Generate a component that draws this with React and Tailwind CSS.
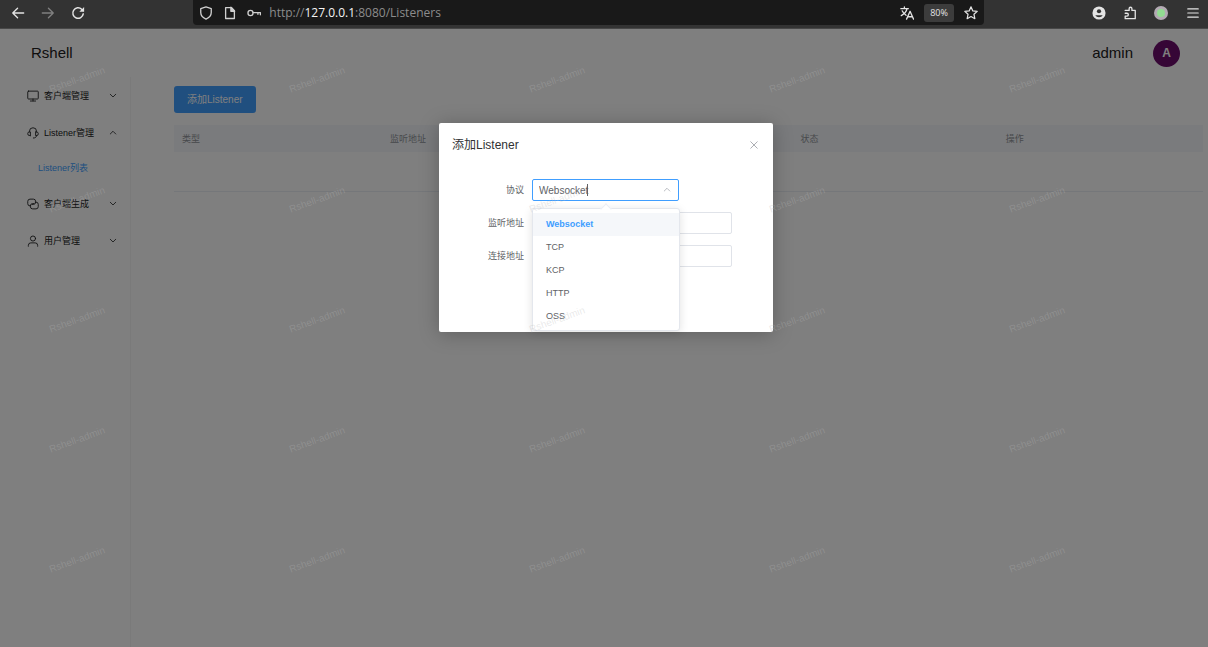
import React from "react";

const navGroups = [
  { label: "客户端管理", icon: "monitor", open: false, items: [] },
  { label: "Listener管理", icon: "headset", open: true, items: ["Listener列表"] },
  { label: "客户端生成", icon: "link", open: false, items: [] },
  { label: "用户管理", icon: "user", open: false, items: [] },
];

const columns = ["类型", "监听地址", "连接地址", "状态", "操作"];
const protocols = ["Websocket", "TCP", "KCP", "HTTP", "OSS"];

function Svg({ size = 16, width = 1.5, children, className = "" }) {
  return (
    <svg
      width={size}
      height={size}
      viewBox="0 0 16 16"
      fill="none"
      stroke="currentColor"
      strokeWidth={width}
      strokeLinecap="round"
      strokeLinejoin="round"
      className={"shrink-0 " + className}
      aria-hidden="true"
    >
      {children}
    </svg>
  );
}

function Chevron({ up = false }) {
  return (
    <Svg size={8} width={1.6}>
      <path d={up ? "M2.500 10L8 4.500l5.500 5.500" : "M2.500 4.500L8 10l5.500-5.500"} />
    </Svg>
  );
}

function NavIcon({ name }) {
  return (
    <Svg size={12} width={1.2}>
      {name === "monitor" && (
        <path d="M2 1.500h12a1 1 0 0 1 1 1V11a1 1 0 0 1-1 1H2a1 1 0 0 1-1-1V2.500a1 1 0 0 1 1-1zM8 12v2.500M4.500 14.700h7" />
      )}
      {name === "headset" && (
        <path d="M4.500 11.500v-5H3.300A2.300 2.300 0 0 0 1 8.800v.4a2.300 2.300 0 0 0 2.300 2.300zM11.500 6.500v5h1.200A2.300 2.300 0 0 0 15 9.200v-.4a2.300 2.300 0 0 0-2.300-2.300zM3.300 6.500V5.700a4.700 4.700 0 0 1 9.400 0v.8M12.700 11.500c0 2-1.500 3.200-4.200 3.200" />
      )}
      {name === "link" && (
        <path d="M5 10.500H4A3 3 0 0 1 1 7.500v-3a3 3 0 0 1 3-3h4.500a3 3 0 0 1 3 3v1A3 3 0 0 1 8.500 8.500H7M11 5.500h1a3 3 0 0 1 3 3v3a3 3 0 0 1-3 3H7.500a3 3 0 0 1-3-3v-1a3 3 0 0 1 3-3H9" />
      )}
      {name === "user" && (
        <>
          <circle cx="8" cy="4.700" r="3.400" />
          <path d="M1.800 15v-1.200a3.300 3.300 0 0 1 3.300-3.300h5.800a3.300 3.300 0 0 1 3.300 3.300V15" />
        </>
      )}
    </Svg>
  );
}

function BrowserBar() {
  return (
    <header className="flex h-[29px] shrink-0 items-start border-b border-[#484848] bg-[#333333] text-[#e4e4e4]">
      <div className="flex h-[25px] w-[16%] shrink-0 items-center gap-4 pl-[11px]">
        <button aria-label="Back" className="flex">
          <Svg size={14}><path d="M14.500 8H2M7.500 2.500L2 8l5.500 5.500" /></Svg>
        </button>
        <button aria-label="Forward" className="flex text-[#808080]">
          <Svg size={14}><path d="M1.500 8H14M8.500 2.500L14 8l-5.500 5.500" /></Svg>
        </button>
        <button aria-label="Reload" className="flex">
          <Svg size={14} width={1.7}>
            <path d="M14 9a6 6 0 1 1-1.800-5.300L14 5.200" />
            <path d="M15 1v5.500H9.500z" fill="currentColor" stroke="none" />
          </Svg>
        </button>
      </div>
      <div className="flex h-[25px] min-w-0 flex-1 items-center rounded-b bg-[#191919] px-1.5">
        <Svg size={14} className="text-[#d0d0d0]"><path d="M8 1l6 2v4.500c0 3.500-2.500 6-6 7.500-3.500-1.500-6-4-6-7.500V3z" /></Svg>
        <Svg size={14} className="ml-2.5 text-[#d0d0d0]">
          <path d="M3 1.800h6.500L13 5.300v9H3z" />
          <path d="M9 1.500V6h4.300z" fill="currentColor" />
        </Svg>
        <Svg size={14} className="ml-2.5 text-[#d0d0d0]">
          <circle cx="4" cy="8" r="2.900" />
          <path d="M7 7.500h8.300v2.500M12.500 7.500v2" />
        </Svg>
        <span className="ml-2 flex-1 truncate font-['Open_Sans',sans-serif] text-[12px] text-[#8c8c8c]">
          http://<span className="text-[#f4f4f4]">127.0.0.1</span>:8080/Listeners
        </span>
        <button aria-label="Translate" className="flex">
          <Svg size={14}><path d="M1 3h8.500M5 1v2M1.500 11c3.500-2 6-4.500 6.500-8M2.500 5.500C3.500 8 5 9 7 10.500M7.500 15L11.500 6l4 9M9 12.300h5" /></Svg>
        </button>
        <button className="ml-2.5 h-[18px] w-[30px] rounded-[3px] bg-[#3c3c3c] font-['Open_Sans',sans-serif] text-[9px]">80%</button>
        <button aria-label="Bookmark" className="ml-2.5 flex">
          <Svg size={14} width={1.4}><path d="M8 1l2.100 4.600 5 .5-3.700 3.400 1 5L8 12l-4.400 2.500 1-5L.9 6.100l5-.5z" /></Svg>
        </button>
      </div>
      <div className="flex h-[25px] w-[224px] shrink-0 items-center justify-end gap-[17px] pr-[9px]">
        <button aria-label="Account" className="flex">
          <Svg size={14}>
            <circle cx="8" cy="8" r="7.500" fill="currentColor" stroke="none" />
            <circle cx="8" cy="6" r="2.400" fill="#333" stroke="none" />
            <path d="M3.800 10.500h8.400c-1.500 3-6.900 3-8.400 0z" fill="#333" stroke="none" />
          </Svg>
        </button>
        <button aria-label="Extensions" className="flex">
          <Svg size={14}><path d="M2.500 5H7V3a1.600 1.600 0 0 1 3.200 0v2H14v9.500H2.500V11.500H4.500a1.600 1.600 0 0 0 0-3.200H2.500" /></Svg>
        </button>
        <button aria-label="Extension" className="h-3.5 w-3.5 rounded-full border-[3px] border-[#b3aab3] bg-[#92dc92]" />
        <button aria-label="Menu" className="ml-0.5 flex">
          <Svg size={12}><path d="M1 2.500h14M1 8h14M1 13.500h14" /></Svg>
        </button>
      </div>
    </header>
  );
}

function Sidebar() {
  return (
    <nav className="w-[131px] shrink-0 border-r border-[#f4f4f4]">
      {navGroups.map((group) => (
        <div key={group.label}>
          <button className="flex h-[37px] w-full items-center gap-[5px] pl-[27px] pr-[13px] text-[9px] text-[#202122]">
            <NavIcon name={group.icon} />
            <span className="flex-1 text-left whitespace-nowrap">{group.label}</span>
            <Chevron up={group.open} />
          </button>
          {group.items.map((item) => (
            <a key={item} href="#listeners" className="flex h-[34px] items-center pl-[38px] text-[9px] text-[#409eff]">
              {item}
            </a>
          ))}
        </div>
      ))}
    </nav>
  );
}

function ListenerTable() {
  return (
    <main className="min-w-0 flex-1 pl-[43px] pr-[5px] pt-[9px]">
      <button className="block h-[27px] rounded-[3px] bg-[#409eff] px-[13px] text-[10px] text-white">添加Listener</button>
      <table className="mt-3 w-full table-fixed text-left text-[9px]">
        <thead>
          <tr className="h-[27px] bg-[#f5f7fa] text-[#909399]">
            {columns.map((column) => (
              <th key={column} className="px-2 font-normal first:w-[208px]">{column}</th>
            ))}
          </tr>
        </thead>
        <tbody>
          <tr className="h-[39px] border-b border-[#ebeef5]">
            <td colSpan={columns.length} className="text-center text-[#909399]">暂无数据</td>
          </tr>
        </tbody>
      </table>
    </main>
  );
}

function Field({ id, label, children }) {
  return (
    <div className="flex h-[22px] items-center">
      <label htmlFor={id} className="w-20 shrink-0 pr-2 text-right text-[9px] text-[#606266]">{label}</label>
      {children}
    </div>
  );
}

function ProtocolSelect() {
  return (
    <div className="relative w-[147px]">
      <input
        id="protocol"
        role="combobox"
        aria-expanded="true"
        aria-controls="protocol-options"
        defaultValue="Websocket"
        className="block h-[22px] w-full rounded-[2px] border border-[#409eff] bg-white pl-1.5 pr-6 text-[10px] text-[#606266] outline-none"
      />
      <span className="absolute left-[55px] top-[5px] h-3 w-px bg-[#606266]" />
      <span className="absolute right-2 top-[7px] flex text-[#a8abb2]"><Chevron up /></span>
      <div className="absolute left-0 top-[29px] z-10 w-[148px] rounded-[3px] border border-[#e4e7ed] bg-white pb-[3px] pt-1 shadow-[0_2px_10px_rgba(0,0,0,0.12)]">
        <span className="absolute left-[69px] top-[-4px] h-2 w-2 rotate-45 border-l border-t border-[#ebeef5] bg-white" />
        <ul id="protocol-options" role="listbox" className="relative grid h-[114px] grid-rows-5">
          {protocols.map((protocol) => (
            <li
              key={protocol}
              role="option"
              aria-selected={protocol === "Websocket"}
              className="flex items-center px-[13px] text-[9px] text-[#606266] aria-selected:bg-[#f5f7fa] aria-selected:font-bold aria-selected:text-[#409eff]"
            >
              {protocol}
            </li>
          ))}
        </ul>
      </div>
    </div>
  );
}

function AddListenerDialog() {
  return (
    <div className="absolute inset-0 flex items-start justify-center bg-black/50 pl-1 pt-[94px]">
      <section
        role="dialog"
        aria-labelledby="dialog-title"
        className="h-[209px] w-[334px] rounded-[2px] bg-white shadow-[0_2px_20px_rgba(0,0,0,0.25)]"
      >
        <div className="flex h-[43px] items-center justify-between pl-[13px] pr-[15px]">
          <h2 id="dialog-title" className="text-[12px] text-[#303133]">添加Listener</h2>
          <button aria-label="Close" className="flex text-[#909399]">
            <Svg size={8}><path d="M1.500 1.500l13 13M14.500 1.500l-13 13" /></Svg>
          </button>
        </div>
        <form className="flex flex-col gap-[11px] pl-[13px] pt-[13px]">
          <Field id="protocol" label="协议"><ProtocolSelect /></Field>
          <Field id="listen-address" label="监听地址">
            <input id="listen-address" className="h-[22px] w-[200px] rounded-[2px] border border-[#e0e3e9] px-2 text-[9px]" />
          </Field>
          <Field id="connect-address" label="连接地址">
            <input id="connect-address" className="h-[22px] w-[200px] rounded-[2px] border border-[#e0e3e9] px-2 text-[9px]" />
          </Field>
        </form>
      </section>
    </div>
  );
}

function Watermark() {
  return (
    <div
      aria-hidden="true"
      className="pointer-events-none absolute inset-0 z-20 grid auto-rows-[120px] grid-cols-[repeat(auto-fill,240px)] overflow-hidden"
    >
      {Array.from({ length: 25 }, (_, i) => (
        <div key={i} className="flex items-start pl-12 pt-[43px]">
          <span className="-rotate-[20deg] text-[10px] text-[#b8b8b8]/30">Rshell-admin</span>
        </div>
      ))}
    </div>
  );
}

export default function App() {
  return (
    <div className="flex min-h-screen flex-col font-['Liberation_Sans','Noto_Sans_CJK_SC',sans-serif] leading-4">
      <BrowserBar />
      <div className="relative flex flex-1 flex-col bg-white">
        <div className="flex h-12 items-center justify-between pl-[31px] pr-7 text-[15px] text-[#202020]">
          <h1>Rshell</h1>
          <div className="flex items-center gap-5">
            <span>admin</span>
            <span className="flex h-[27px] w-[27px] items-center justify-center rounded-full bg-[#6c0c6c] text-[12px] font-bold text-white">A</span>
          </div>
        </div>
        <div className="flex flex-1">
          <Sidebar />
          <ListenerTable />
        </div>
        <AddListenerDialog />
        <Watermark />
      </div>
    </div>
  );
}
